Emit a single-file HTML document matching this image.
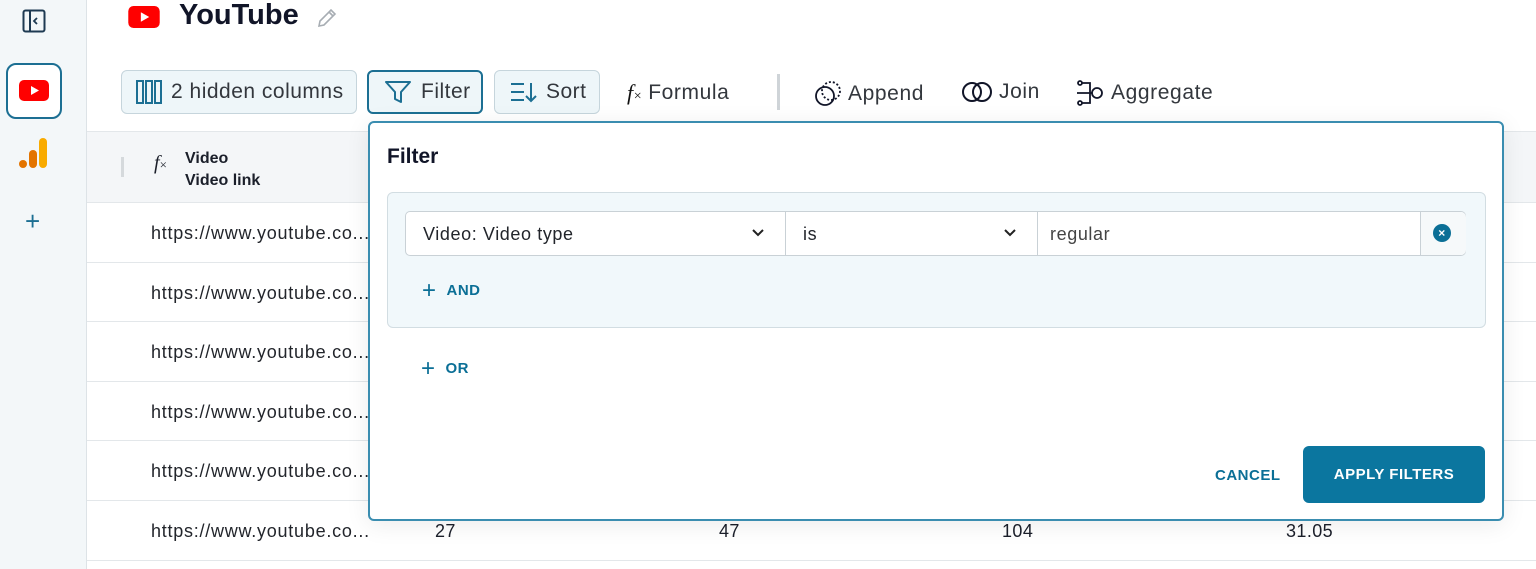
<!DOCTYPE html>
<html><head><style>
*{box-sizing:border-box;margin:0;padding:0}
body{width:1536px;height:569px;overflow:hidden;font-family:"Liberation Sans",sans-serif;background:#fff;position:relative;color:#1b1f2a}
.side{position:absolute;left:0;top:0;width:87px;height:569px;background:#f3f7f9;border-right:1px solid #dde3e7}
.abs{position:absolute}
.btn{position:absolute;top:70px;height:44px;border:1px solid #c6d5dc;border-radius:6px;background:#eef6f9;font-size:21px;letter-spacing:.5px;color:#33373d;display:flex;align-items:center}
.tool{position:absolute;top:80px;font-size:21px;letter-spacing:.6px;color:#33373d;display:flex;align-items:center;gap:6px}
.row{position:absolute;left:87px;right:0;height:1px;background:#e3e7ea}
.url{position:absolute;left:151px;font-size:18px;letter-spacing:.75px;color:#22252b}
.num{position:absolute;top:521px;font-size:18px;letter-spacing:.4px}
.cap{font-weight:bold;letter-spacing:.5px;color:#0b6f96;font-size:15px}
</style></head><body>
<div class="side">
 <svg class="abs" style="left:22px;top:9px" width="24" height="24" viewBox="0 0 24 24"><rect x="1.5" y="1.5" width="21" height="21" rx="2" fill="none" stroke="#1e3a52" stroke-width="2"/><line x1="8" y1="2" x2="8" y2="22" stroke="#1e3a52" stroke-width="2"/><path d="M15 9l-3 3 3 3" fill="none" stroke="#1e3a52" stroke-width="1.8"/></svg>
 <div class="abs" style="left:6px;top:63px;width:56px;height:56px;border:2px solid #1c6f93;border-radius:10px;background:#fff"></div>
 <svg class="abs" style="left:19px;top:80px" width="30" height="21" viewBox="0 0 30 21"><rect width="30" height="21" rx="5" fill="#ff0000"/><path d="M12 6l8 4.5-8 4.5z" fill="#fff"/></svg>
 <svg class="abs" style="left:19px;top:137px" width="30" height="32" viewBox="0 0 30 32"><rect x="20" y="1" width="8" height="30" rx="4" fill="#f9ab00"/><rect x="10" y="13" width="8" height="18" rx="4" fill="#e37400"/><circle cx="4" cy="27" r="4" fill="#e37400"/></svg>
 <div class="abs" style="left:25px;top:206px;font-size:26px;color:#1c6f93">+</div>
</div>
<svg class="abs" style="left:128px;top:6px" width="32" height="22" viewBox="0 0 30 21"><rect width="30" height="21" rx="5" fill="#ff0000"/><path d="M12 6l8 4.5-8 4.5z" fill="#fff"/></svg>
<div class="abs" style="left:179px;top:-1px;font-size:29px;font-weight:bold;color:#111528">YouTube</div>
<svg class="abs" style="left:315px;top:6px" width="24" height="24" viewBox="0 0 24 24"><path d="M4 20l1-5L16 4l4 4L9 19z M14 6l4 4" fill="none" stroke="#a7adb3" stroke-width="1.6"/></svg>
<div class="btn" style="left:121px;width:236px"><svg style="margin:0 9px 0 14px" width="26" height="24" viewBox="0 0 26 24"><g fill="none" stroke="#1c6f93" stroke-width="2"><rect x="1" y="1" width="6" height="22"/><rect x="10" y="1" width="6" height="22"/><rect x="19" y="1" width="6" height="22"/></g></svg>2 hidden columns</div>
<div class="btn" style="left:367px;width:116px;border:2px solid #1c6f93"><svg style="margin:0 10px 0 16px" width="26" height="24" viewBox="0 0 26 24"><path d="M1 2h24l-9 10v10l-6-3v-7z" fill="none" stroke="#1c6f93" stroke-width="2" stroke-linejoin="round"/></svg>Filter</div>
<div class="btn" style="left:494px;width:106px"><svg style="margin:0 8px 0 15px" width="28" height="22" viewBox="0 0 28 22"><g stroke="#1c6f93" stroke-width="2" fill="none"><path d="M1 3h13M1 11h13M1 19h13M21 2v18M16 15l5 5 5-5"/></g></svg>Sort</div>
<div class="tool" style="left:627px"><span style="font-family:'Liberation Serif',serif;font-style:italic;font-size:22px;color:#111">f<small style="font-size:14px;font-style:normal">×</small></span>Formula</div>
<div class="abs" style="left:777px;top:74px;width:3px;height:36px;background:#cfd4d8"></div>
<div class="tool" style="left:814px"><svg width="28" height="28" viewBox="0 0 28 28"><g fill="none" stroke="#111528" stroke-width="1.8"><circle cx="11" cy="16" r="9"/><circle cx="17" cy="11" r="9" stroke-dasharray="2 2"/></g></svg>Append</div>
<div class="tool" style="left:961px"><svg width="32" height="22" viewBox="0 0 32 22"><g fill="none" stroke="#111528" stroke-width="2"><circle cx="11" cy="11" r="9"/><circle cx="21" cy="11" r="9"/></g></svg>Join</div>
<div class="tool" style="left:1077px"><svg width="28" height="26" viewBox="0 0 28 26"><g fill="none" stroke="#111528" stroke-width="1.8"><circle cx="3" cy="3" r="2"/><circle cx="3" cy="23" r="2"/><circle cx="20" cy="13" r="5"/><path d="M5 3h8v20H5M0 13h15"/></g></svg>Aggregate</div>
<div class="abs" style="left:87px;right:0;top:131px;height:71px;background:#f4f6f8;border-top:1px solid #e3e7ea"></div>
<div class="abs" style="left:121px;top:157px;width:3px;height:20px;background:#d5d9dc"></div>
<div class="abs" style="left:154px;top:152px;font-family:'Liberation Serif',serif;font-style:italic;font-size:20px">f<small style="font-size:13px;font-style:normal">×</small></div>
<div class="abs" style="left:185px;top:148px;font-size:16px;font-weight:bold;line-height:22px">Video<br>Video link</div>
<div class="row" style="top:202px"></div><div class="row" style="top:262px"></div><div class="row" style="top:321px"></div><div class="row" style="top:381px"></div><div class="row" style="top:440px"></div><div class="row" style="top:500px"></div><div class="row" style="top:560px"></div>
<div class="url" style="top:223px">https://www.youtube.co...</div>
<div class="url" style="top:283px">https://www.youtube.co...</div>
<div class="url" style="top:342px">https://www.youtube.co...</div>
<div class="url" style="top:402px">https://www.youtube.co...</div>
<div class="url" style="top:461px">https://www.youtube.co...</div>
<div class="url" style="top:521px">https://www.youtube.co...</div>
<div class="num" style="left:435px">27</div>
<div class="num" style="left:719px">47</div>
<div class="num" style="left:1002px">104</div>
<div class="num" style="left:1286px">31.05</div>
<div class="abs" style="left:368px;top:121px;width:1136px;height:400px;background:#fff;border:2px solid #3a8db0;border-radius:6px;box-shadow:0 4px 24px rgba(0,0,0,.08)">
 <div class="abs" style="left:17px;top:22px;font-size:21px;font-weight:bold;color:#111528">Filter</div>
 <div class="abs" style="left:17px;top:69px;width:1099px;height:136px;background:#f1f8fb;border:1px solid #d2dde2;border-radius:6px">
  <div class="abs" style="left:17px;top:18px;width:1061px;height:45px;background:#fff;border:1px solid #c9d1d6;border-radius:5px;font-size:18px;letter-spacing:.6px;color:#22252b">
   <div class="abs" style="left:17px;top:12px">Video: Video type</div>
   <svg class="abs" style="left:345px;top:16px" width="14" height="10" viewBox="0 0 14 10"><path d="M2 2l5 5 5-5" fill="none" stroke="#222" stroke-width="2"/></svg>
   <div class="abs" style="left:379px;top:0;width:1px;height:43px;background:#c9d1d6"></div>
   <div class="abs" style="left:397px;top:12px">is</div>
   <svg class="abs" style="left:597px;top:16px" width="14" height="10" viewBox="0 0 14 10"><path d="M2 2l5 5 5-5" fill="none" stroke="#222" stroke-width="2"/></svg>
   <div class="abs" style="left:631px;top:0;width:1px;height:43px;background:#c9d1d6"></div>
   <div class="abs" style="left:644px;top:12px;color:#444">regular</div>
   <div class="abs" style="left:1014px;top:0;width:46px;height:43px;border-left:1px solid #c9d1d6;background:#f6f9fa;border-radius:0 5px 5px 0"></div>
   <div class="abs" style="left:1027px;top:12px;width:18px;height:18px;border-radius:50%;background:#0b6f96;color:#fff;font-size:12px;font-weight:bold;text-align:center;line-height:18px">×</div>
  </div>
  <div class="abs cap" style="left:34px;top:84px"><span style="font-size:24px;font-weight:normal;vertical-align:-3px;margin-right:10px">+</span>AND</div>
 </div>
 <div class="abs cap" style="left:51px;top:232px"><span style="font-size:24px;font-weight:normal;vertical-align:-3px;margin-right:10px">+</span>OR</div>
 <div class="abs cap" style="left:845px;top:344px">CANCEL</div>
 <div class="abs cap" style="left:933px;top:323px;width:182px;height:57px;background:#0b769f;border-radius:6px;color:#fff;text-align:center;line-height:57px">APPLY FILTERS</div>
</div>
</body></html>
